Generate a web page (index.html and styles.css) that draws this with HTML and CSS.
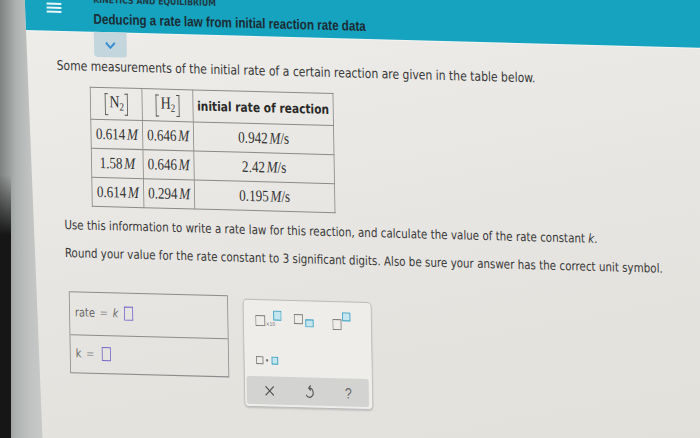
FILE: index.html
```html
<!DOCTYPE html>
<html>

<head>
    <meta charset="utf-8" />
    <title>Deducing a rate law from initial reaction rate data</title>
    <meta name="viewport" content="width=device-width, initial-scale=1">
    <link rel="stylesheet" href="styles.css">
</head>

<body>
    <div class="screen">
        <!-- top bar -->
        <header class="topbar">
            <div class="menu"><span></span><span></span><span></span></div>
            <div class="heading">
                <div class="topic">KINETICS AND EQUILIBRIUM</div>
                <div class="title">Deducing a rate law from initial reaction rate data</div>
            </div>
        </header>

        <main class="content">
            <div class="tab">
                <svg width="14" height="8" viewBox="0 0 14 8"><polyline points="1.5,1.5 7,6.5 12.5,1.5" fill="none" stroke="#3a8fd3" stroke-width="2.2" /></svg>
            </div>

            <p class="lead">Some measurements of the initial rate of a certain reaction are given in the table below.</p>

            <table class="data">
                <tr class="head">
                    <th class="conc"><span class="br l"></span>N<sub>2</sub><span class="br r"></span></th>
                    <th class="conc"><span class="br l"></span>H<sub>2</sub><span class="br r"></span></th>
                    <th class="rate-head">initial rate of reaction</th>
                </tr>
                <tr>
                    <td>0.614<i>M</i></td>
                    <td>0.646<i>M</i></td>
                    <td>0.942<i>M</i>/s</td>
                </tr>
                <tr>
                    <td>1.58<i>M</i></td>
                    <td>0.646<i>M</i></td>
                    <td>2.42<i>M</i>/s</td>
                </tr>
                <tr>
                    <td>0.614<i>M</i></td>
                    <td>0.294<i>M</i></td>
                    <td>0.195<i>M</i>/s</td>
                </tr>
            </table>

            <p class="note">Use this information to write a rate law for this reaction, and calculate the value of the rate constant <i>k</i>.</p>
            <p class="note second">Round your value for the rate constant to 3 significant digits. Also be sure your answer has the correct unit symbol.</p>

            <div class="answer">
                <div class="answer-box">
                    <div class="answer-row">rate <span class="eq">=</span> <i>k</i> <span class="slot"></span></div>
                    <div class="answer-row low">k <span class="eq">=</span> <span class="slot"></span></div>
                </div>

                <div class="palette">
                    <div class="tools">
                        <div class="tool-row">
                            <div class="tool">
                                <svg width="32" height="16" viewBox="0 0 32 16">
                                    <rect x="0.5" y="5.5" width="11" height="10" fill="none" stroke="#7a7a7a" />
                                    <text x="12.5" y="15.5" font-size="5.5" font-family="DejaVu Sans, sans-serif" fill="#7a7a7a">×10</text>
                                    <rect x="22.5" y="0.5" width="9" height="9" fill="#c6e6ef" stroke="#2f9cc0" />
                                </svg>
                            </div>
                            <div class="tool">
                                <svg width="25" height="16" viewBox="0 0 25 16">
                                    <rect x="0.5" y="3.5" width="10" height="9" fill="none" stroke="#7a7a7a" />
                                    <rect x="14.5" y="8.5" width="9" height="7" fill="#c6e6ef" stroke="#2f9cc0" />
                                </svg>
                            </div>
                            <div class="tool">
                                <svg width="23" height="18" viewBox="0 0 23 18">
                                    <rect x="0.5" y="7.5" width="10" height="10" fill="none" stroke="#7a7a7a" />
                                    <rect x="12.5" y="0.5" width="9" height="8" fill="#c6e6ef" stroke="#2f9cc0" />
                                </svg>
                            </div>
                        </div>
                        <div class="tool-row">
                            <div class="tool">
                                <svg width="28" height="9" viewBox="0 0 28 9">
                                    <rect x="0.5" y="0.5" width="8" height="7" fill="none" stroke="#7a7a7a" />
                                    <circle cx="13.5" cy="4" r="1.3" fill="#7a7a7a" />
                                    <rect x="19.5" y="0.5" width="7" height="7" fill="#c6e6ef" stroke="#2f9cc0" />
                                </svg>
                            </div>
                        </div>
                    </div>
                    <div class="actions">
                        <div class="act">
                            <svg width="12" height="11" viewBox="0 0 12 11"><path d="M1 1 L11 10 M11 1 L1 10" stroke="#555" stroke-width="1.3" /></svg>
                        </div>
                        <div class="act">
                            <svg width="13" height="14" viewBox="0 0 13 14">
                                <path d="M6.2 3.6 A4.6 4.6 0 1 1 2.4 10.4" fill="none" stroke="#555" stroke-width="1.3" />
                                <path d="M8.2 1 L5.6 3.6 L8.2 6" fill="none" stroke="#555" stroke-width="1.3" />
                            </svg>
                        </div>
                        <div class="act help">?</div>
                    </div>
                </div>
            </div>
        </main>
    </div>
</body>

</html>
```

FILE: styles.css
```css
* {
    box-sizing: border-box;
}

html,
body {
    margin: 0;
    height: 438px;
    overflow: hidden;
}

/* grey monitor edge on the left */
body {
    font-family: "DejaVu Sans", sans-serif;
    color: #383838;
    background:
        linear-gradient(rgba(20, 20, 20, 0) 175px, #161616 235px) 0 0 / 11px 100% no-repeat,
        linear-gradient(90deg, #7d817f 0, #939795 7px, #aeb2b0 16px, #c0c3c1 30px, #c8cbc9 45px);
}

/* the photo is slightly tilted and squeezed */
.screen {
    width: 860px;
    height: 500px;
    margin: -20px 0 0 24px;
    transform-origin: 0 0;
    transform: skewY(1.5deg) skewX(1deg) scaleX(0.82);
    clip-path: polygon(0 0, 100% 0, 100% 100%, 14px 100%);
    background: linear-gradient(170deg, #efeeea, #e6e4e0 55%, #e1dfda);
}

.topbar {
    height: 50px;
    display: flex;
    align-items: flex-start;
    background: #16a3bf;
    box-shadow: 0 1px 0 #f4f5f3;
}

.menu {
    margin: 22px 0 0 27px;
    width: 18px;
}

.menu span {
    display: block;
    height: 2px;
    margin-bottom: 2px;
    background: #e9f5f8;
}

.heading {
    margin-left: 39px;
}

.topic {
    margin-top: 12px;
    font-size: 9.5px;
    line-height: 12px;
    font-weight: bold;
    color: #1f3944;
}

.title {
    margin-top: 5px;
    font-family: "Liberation Sans", Arial, sans-serif;
    font-size: 14.2px;
    line-height: 16px;
    font-weight: bold;
    color: #1b2c35;
}

.content {
    padding-left: 38px;
}

.tab {
    margin-left: 46px;
    width: 40px;
    height: 25px;
    display: flex;
    align-items: center;
    justify-content: center;
    background: #c4d6dd;
    border-radius: 0 0 4px 4px;
}

.lead {
    margin: 2px 0 0;
    font-size: 13.2px;
    line-height: 16px;
}

/* data table */
.data {
    margin: 12px 0 0 40px;
    border-collapse: collapse;
    font-family: "Liberation Serif", "Times New Roman", serif;
    font-size: 16px;
    color: #333;
}

.data td,
.data th {
    border: 1px solid #8a8a8a;
    padding: 0;
    text-align: center;
    height: 29px;
}

.data td:nth-child(1) {
    width: 63px;
}

.data td:nth-child(2) {
    width: 62px;
}

.data td:nth-child(3) {
    width: 171px;
}

.data tr.head th {
    height: 32px;
}

.data i {
    margin-left: 2px;
}

.conc {
    font-weight: normal;
    font-size: 17px;
    white-space: nowrap;
}

.conc sub {
    font-size: 11px;
    vertical-align: -3px;
    line-height: 0;
}

.br {
    display: inline-block;
    width: 4px;
    height: 22px;
    vertical-align: middle;
    border: 1px solid #555;
}

.br.l {
    border-right: none;
    margin-right: 2px;
}

.br.r {
    border-left: none;
    margin-left: 1px;
}

.rate-head {
    font-family: "DejaVu Sans", sans-serif;
    font-size: 13px;
    font-weight: bold;
    white-space: nowrap;
    color: #2a2a2a;
}

.note {
    margin: 11px 0 0 6px;
    font-size: 12.6px;
    line-height: 15px;
}

.note.second {
    margin-top: 13px;
}

/* answer area */
.answer {
    margin: 31px 0 0 10px;
    display: flex;
    align-items: flex-start;
    gap: 18px;
}

.answer-box {
    width: 194px;
    border: 1px solid #8c8c8c;
}

.answer-row {
    height: 42px;
    padding: 12px 0 0 6px;
    font-size: 12px;
    line-height: 16px;
    color: #666;
}

.answer-row.low {
    height: 38px;
    padding-top: 10px;
    border-top: 1px solid #8c8c8c;
}

.eq {
    color: #999;
    margin: 0 2px;
}

.slot {
    display: inline-block;
    width: 11px;
    height: 14px;
    margin-left: 3px;
    vertical-align: -3px;
    border: 1.5px solid #7668c8;
}

.palette {
    margin-top: 3px;
    width: 157px;
    background: #eeede9;
    border: 1px solid #bcbcbc;
    border-radius: 5px;
    box-shadow: 0 1px 2px rgba(0, 0, 0, 0.15);
}

.tools {
    height: 76px;
    padding: 10px 0 0 14px;
}

.tool-row {
    display: flex;
    height: 18px;
}

.tool-row + .tool-row {
    margin-top: 22px;
}

.tool {
    width: 55px;
}

.actions {
    height: 28px;
    margin: 0 4px 2px 2px;
    padding-left: 4px;
    display: flex;
    align-items: center;
    background: #d3d3d1;
    border-radius: 3px;
}

.act {
    width: 48px;
    display: flex;
    justify-content: center;
}

.help {
    font-family: "Liberation Sans", Arial, sans-serif;
    font-size: 15px;
    color: #666;
}
```
